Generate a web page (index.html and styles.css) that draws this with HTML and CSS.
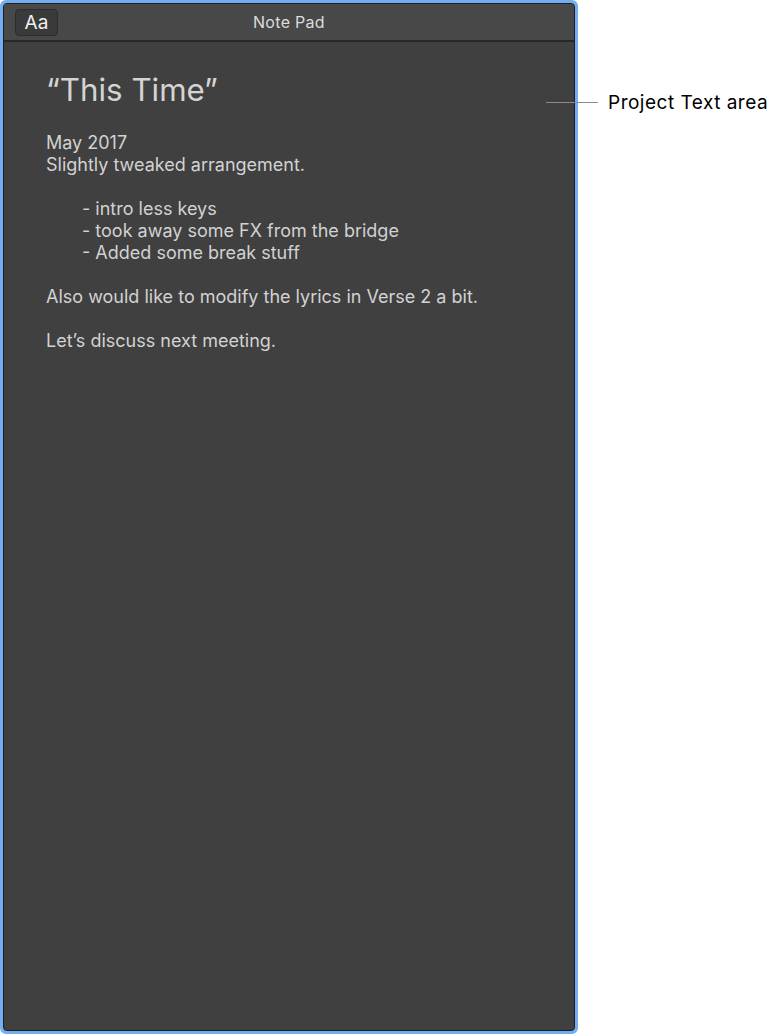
FILE: index.html
```html
<!DOCTYPE html>
<html>
<head>
<meta charset="utf-8">
<link rel="stylesheet" href="styles.css">
</head>
<body>
<div class="stage">
  <div class="window">
    <div class="inner">
      <div class="header">
        <button class="aa">Aa</button>
        <div class="title">Note Pad</div>
      </div>
      <div class="content">
        <h1 class="note-title">“This Time”</h1>
        <p class="line">May 2017</p>
        <p class="line">Slightly tweaked arrangement.</p>
        <p class="line blank">&nbsp;</p>
        <p class="line indent">- intro less keys</p>
        <p class="line indent">- took away some FX from the bridge</p>
        <p class="line indent">- Added some break stuff</p>
        <p class="line blank">&nbsp;</p>
        <p class="line">Also would like to modify the lyrics in Verse 2 a bit.</p>
        <p class="line blank">&nbsp;</p>
        <p class="line">Let’s discuss next meeting.</p>
      </div>
    </div>
  </div>
  <div class="callout">
    <span class="callout-line"></span>
    <span class="callout-text">Project Text area</span>
  </div>
</div>
</body>
</html>
```
FILE: styles.css
```css
* { box-sizing: border-box; }
html, body { margin: 0; padding: 0; background: #ffffff; }
body { font-family: Inter, "Liberation Sans", Arial, sans-serif; }
.stage { position: relative; width: 769px; height: 1035px; }
.window {
  width: 578px;
  height: 1034px;
  border: 3px solid #72aef0;
  border-radius: 6px;
  background: #72aef0;
}
.inner {
  height: 100%;
  border: 1px solid #1e1e1e;
  border-radius: 4px;
  background: #404040;
  display: flex;
  flex-direction: column;
  overflow: hidden;
}
.header {
  height: 38px;
  flex: none;
  background: #484848;
  border-bottom: 2px solid #282828;
  display: flex;
  align-items: center;
  position: relative;
  padding-left: 11px;
}
.aa {
  width: 43px;
  height: 27px;
  margin-top: 1px;
  background: #3a3a3a;
  border: 1px solid #2c2c2c;
  border-radius: 4px;
  color: #f0f0f0;
  font-family: Inter, "Liberation Sans", Arial, sans-serif;
  font-size: 19px;
  padding: 0;
  line-height: 25px;
}
.title {
  position: absolute;
  left: 0; right: 0; top: 0; bottom: 0;
  display: flex;
  align-items: center;
  justify-content: center;
  color: #dcdcdc;
  font-size: 16px;
  letter-spacing: 0.3px;
  pointer-events: none;
}
.content {
  padding: 28px 0 0 42px;
  color: #d2d2d2;
}
.note-title {
  margin: 0 0 22px 0;
  font-weight: normal;
  font-size: 31.3px;
  line-height: 40px;
  color: #d4d4d4;
}
.line {
  margin: 0;
  font-size: 18px;
  line-height: 22px;
  white-space: pre;
}
.indent { padding-left: 36px; }
.callout {
  position: absolute;
  left: 546px;
  top: 91px;
  display: flex;
  align-items: center;
  height: 22px;
}
.callout-line {
  width: 52px;
  height: 1px;
  background: #8c8c8c;
}
.callout-text {
  margin-left: 10px;
  font-size: 19px;
  letter-spacing: 0.5px;
  color: #000;
}
```
